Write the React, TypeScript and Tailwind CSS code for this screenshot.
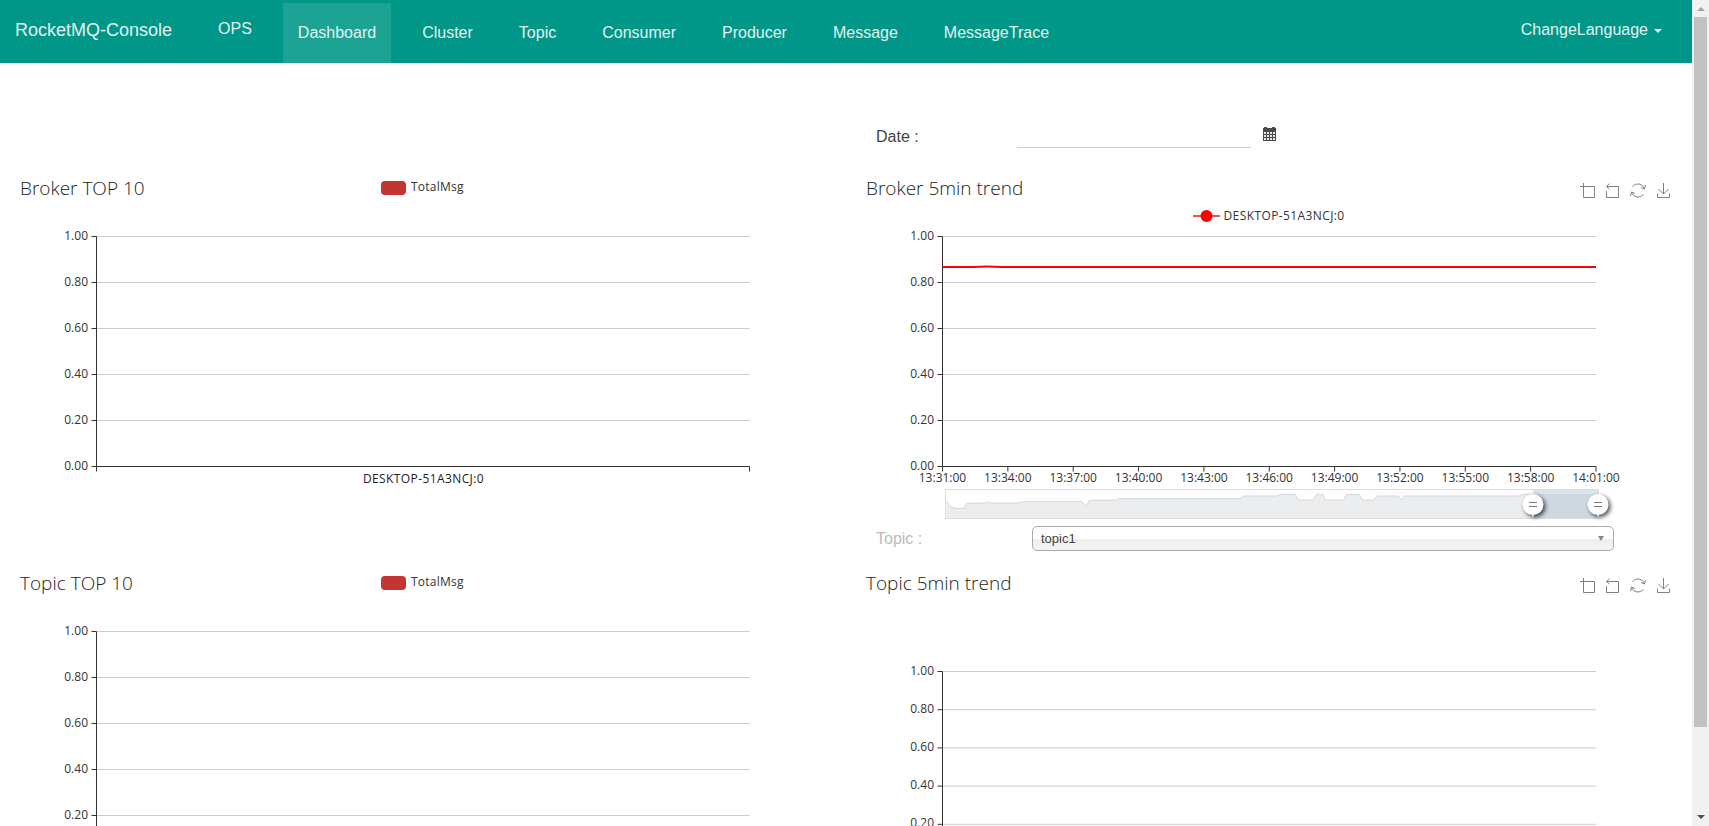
import type { ReactNode } from "react";

const navItems = ["Cluster", "Topic", "Consumer", "Producer", "Message", "MessageTrace"];
const yLabels = ["1.00", "0.80", "0.60", "0.40", "0.20", "0.00"];
const times = [
  "13:31:00", "13:34:00", "13:37:00", "13:40:00", "13:43:00", "13:46:00",
  "13:49:00", "13:52:00", "13:55:00", "13:58:00", "14:01:00",
];

// overview series of the zoom slider, svg coords
const sparkline =
  "100.7,295.3 104,300.7 109,302.3 118,302.3 120.7,297.3 140.7,297 142.3,295.7 144,297 174,297 176.3,295.7 235.7,295.7 240.7,300.7 243,294.3 270.7,294 273,292.7 394,292.7 397.3,290 430.7,290 434,288.3 449,288.3 452.3,294 467.3,294 470.7,288.3 476.7,288.3 479,294 497.3,294 500.7,288.3 513.3,288.3 516.7,294 528,294 530.7,290 552.3,290 555.7,294 558,290 672.3,290 677.3,288.3 687,288";

function CropIcon() {
  return (
    <svg width="15" height="15" viewBox="0 0 15 15" fill="none" stroke="#808080">
      <path d="M0 3.5H14.5V14.5H3.5V0" />
    </svg>
  );
}

function BackIcon() {
  return (
    <svg width="13" height="15" viewBox="0 0 13 15" fill="none" stroke="#808080">
      <path d="M3.5 0.5L0.5 3.5L3.5 6M0.5 3.5H12.5V14.5H0.5V8" />
    </svg>
  );
}

function RestoreIcon() {
  return (
    <svg width="16" height="15" viewBox="0 0 16 15" fill="none" stroke="#808080">
      <path d="M14.5 5.5A7 7 0 0 0 2.5 3.5M1.5 9.5A7 7 0 0 0 13.5 11.5" />
      <path d="M15.5 2L14.5 6L11 4.5M0.5 13L1.5 9L5 10.5" />
    </svg>
  );
}

function SaveIcon() {
  return (
    <svg width="13" height="15" viewBox="0 0 13 15" fill="none" stroke="#808080">
      <path d="M6.5 0V11M1.5 6L6.5 11L11.5 6M0.5 10.5V14.5H12.5V10.5" />
    </svg>
  );
}

function CalendarIcon() {
  return (
    <svg width="13" height="14" viewBox="0 0 13 14">
      <rect x="1" y="0" width="3" height="3" fill="#555" />
      <rect x="9" y="0" width="3" height="3" fill="#555" />
      <rect x="0" y="1" width="13" height="13" fill="#4a4a4a" />
      {[5, 8, 11].map((y) =>
        [1, 4, 7, 10].map((x) => (
          <rect key={`${x}-${y}`} x={x} y={y} width="2" height="2" fill="#e8e8e8" />
        ))
      )}
    </svg>
  );
}

function Toolbox() {
  return (
    <div className="ml-auto mr-[22px] mt-[5px] flex items-center gap-[11px]">
      <CropIcon />
      <BackIcon />
      <RestoreIcon />
      <SaveIcon />
    </div>
  );
}

function Legend() {
  return (
    <div className="flex items-center">
      <span className="h-[14px] w-[25px] rounded-[4px] bg-[#c23531]" />
      <span className="ml-[5px] -mt-[2px] font-['Open_Sans',sans-serif] text-[12px] tracking-[0.25px] text-[#333]">
        TotalMsg
      </span>
    </div>
  );
}

function Axes({ top, step, right }: { top: number; step: number; right: number }) {
  return (
    <>
      {yLabels.map((label, i) => {
        const y = top + i * step;
        return (
          <g key={label}>
            <line x1="96.5" x2={right} y1={y} y2={y} stroke={i === 5 ? "#333" : "#ccc"} />
            <line x1="91.5" x2="96.5" y1={y} y2={y} stroke="#333" />
            <text x="88" y={y + 3} textAnchor="end" fontSize="12" fill="#333">
              {label}
            </text>
          </g>
        );
      })}
      <line x1="96.5" x2="96.5" y1={top} y2={top + 5 * step} stroke="#333" />
    </>
  );
}

function Handle({ x }: { x: number }) {
  return (
    <g className="drop-shadow-[2px_2px_2px_rgba(0,0,0,0.7)]">
      <path d={`M${x - 1} 308 L${x} 312 L${x + 1} 308 Z`} fill="#fff" />
      <circle cx={x} cy="298.5" r="10.5" fill="#fff" />
      <path d={`M${x - 4} 296.5H${x + 4}M${x - 4} 300.5H${x + 4}`} stroke="#777" strokeWidth="1.2" />
    </g>
  );
}

function BarChart() {
  return (
    <svg width="846" height="320" className="block font-['Open_Sans',sans-serif]">
      <Axes top={30.5} step={46} right={749.5} />
      <line x1="96.5" x2="96.5" y1="260.5" y2="265.5" stroke="#333" />
      <line x1="749.5" x2="749.5" y1="260.5" y2="265.5" stroke="#333" />
      <text x="423.5" y="277" textAnchor="middle" fontSize="12" letterSpacing="0.4" fill="#222">
        DESKTOP-51A3NCJ:0
      </text>
    </svg>
  );
}

function BrokerTrend() {
  const right = 750;
  return (
    <svg width="846" height="315" className="block font-['Open_Sans',sans-serif]">
      {/* legend */}
      <line x1="347" x2="374" y1="10" y2="10" stroke="#ff0000" strokeOpacity="0.7" strokeWidth="2" />
      <circle cx="360.5" cy="10" r="6" fill="#ff0000" />
      <text x="377.5" y="14" fontSize="12" letterSpacing="0.4" fill="#333">
        DESKTOP-51A3NCJ:0
      </text>

      <Axes top={30.5} step={46} right={right} />
      <path d="M96.5 61H127Q141 60 155 61H750" fill="none" stroke="#ff0000" strokeWidth="2" />

      {times.map((time, i) => {
        const x = 96.5 + i * 65.35;
        return (
          <g key={time}>
            <line x1={x} x2={x} y1="260.5" y2="265.5" stroke="#333" />
            <text x={x} y="276" textAnchor="middle" fontSize="12" fill="#333">
              {time}
            </text>
          </g>
        );
      })}

      {/* zoom slider */}
      <rect x="99.5" y="283.5" width="653" height="29" fill="none" stroke="#ddd" />
      <polygon points={`100,312 ${sparkline} 687,312`} fill="#ecedef" stroke="none" />
      <polyline points={sparkline} fill="none" stroke="#d3d6da" />
      <rect x="687" y="284" width="65" height="5" fill="#dde3ea" />
      <rect x="687" y="288" width="65" height="24" fill="#cfd7e1" />
      <Handle x={687} />
      <Handle x={752} />
    </svg>
  );
}

function TopicTrend() {
  return (
    <svg width="846" height="320" className="block font-['Open_Sans',sans-serif]">
      <Axes top={70.5} step={38.2} right={750} />
    </svg>
  );
}

function Panel({
  title,
  legend,
  tools,
  children,
}: {
  title: string;
  legend?: boolean;
  tools?: boolean;
  children: ReactNode;
}) {
  return (
    <section className="h-[395px]">
      <div className="flex h-[36px] items-center pl-[20px]">
        <h2 className={`font-['Open_Sans',sans-serif] text-[19px] font-light text-[#222] ${legend ? "w-[361px]" : ""}`}>
          {title}
        </h2>
        {legend && <Legend />}
        {tools && <Toolbox />}
      </div>
      {children}
    </section>
  );
}

export default function App() {
  return (
    <div className="flex h-screen overflow-hidden bg-white font-['Liberation_Sans',Arial,sans-serif]">
      <div className="min-w-0 flex-1">
        <nav className="flex h-[63px] gap-[16px] bg-[#009688] text-[16px] text-[#e0f2f1]">
          <a className="flex h-[60px] items-center px-[15px] text-[18px]">RocketMQ-Console</a>
          <a className="flex h-[58px] items-center px-[15px]">OPS</a>
          <a className="mt-[3px] flex h-[60px] items-center bg-[#1ca394] px-[15px]">Dashboard</a>
          {navItems.map((item) => (
            <a key={item} className="mt-[3px] flex h-[60px] items-center px-[15px]">
              {item}
            </a>
          ))}
          <a className="ml-auto mr-[30px] flex h-[60px] items-center">
            ChangeLanguage
            <span className="ml-[6px] mt-[2px] border-x-[4px] border-t-[4px] border-x-transparent border-t-[#e0f2f1]" />
          </a>
        </nav>

        <div className="grid h-[107px] grid-cols-2 pt-[62px]">
          <div />
          <div className="flex items-start pl-[30px] text-[16px] text-[#444]">
            <label className="w-[141px] leading-[24px]">Date :</label>
            <div className="h-[23px] w-[234px] border-b border-[#ccc]" />
            <span className="ml-[12px] mt-[2px]">
              <CalendarIcon />
            </span>
          </div>
        </div>

        <div className="grid grid-cols-2">
          <Panel title="Broker TOP 10" legend>
            <BarChart />
          </Panel>
          <Panel title="Broker 5min trend" tools>
            <BrokerTrend />
            <div className="mt-[5px] flex items-center pl-[30px]">
              <label className="w-[156px] text-[16px] text-[#bbb]">Topic :</label>
              <div className="flex h-[25px] w-[582px] items-center justify-between rounded-[5px] border border-[#aaa] bg-[linear-gradient(#fff_50%,#eee_50%,#f4f4f4)] pl-[8px] pr-[9px] text-[13px] text-[#444]">
                <span>topic1</span>
                <span className="border-x-[3.5px] border-t-[5px] border-x-transparent border-t-[#888]" />
              </div>
            </div>
          </Panel>
          <Panel title="Topic TOP 10" legend>
            <BarChart />
          </Panel>
          <Panel title="Topic 5min trend" tools>
            <TopicTrend />
          </Panel>
        </div>
      </div>

      {/* page scrollbar */}
      <div className="flex h-full w-[17px] shrink-0 flex-col items-center justify-between bg-[#f1f1f1]">
        <div className="flex w-full flex-col items-center">
          <span className="mt-[7px] border-x-[4px] border-b-[4px] border-x-transparent border-b-[#a3a3a3]" />
          <div className="mt-[6px] h-[710px] w-[13px] bg-[#c1c1c1]" />
        </div>
        <span className="mb-[7px] border-x-[4px] border-t-[4px] border-x-transparent border-t-[#505050]" />
      </div>
    </div>
  );
}
